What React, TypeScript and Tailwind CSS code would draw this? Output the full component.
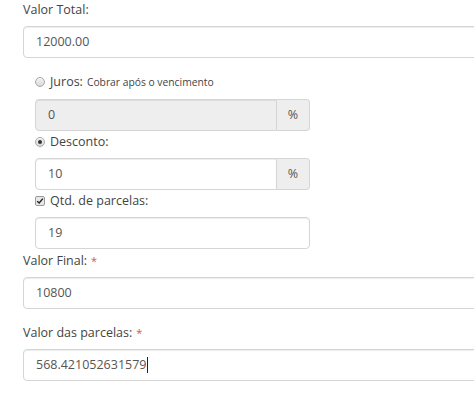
import type { ReactNode } from "react";

const font = { fontFamily: "'Open Sans', 'Noto Sans', sans-serif" };

function Field({ children, className = "" }: { children: ReactNode; className?: string }) {
  return (
    <div
      className={`h-[32px] flex items-center px-3 border border-[#d5d5d5] rounded-[4px] bg-white text-[12.5px] text-[#555] shadow-[inset_0_1px_1px_rgba(0,0,0,0.075)] ${className}`}
    >
      {children}
    </div>
  );
}

function Addon({ value, disabled }: { value: string; disabled?: boolean }) {
  return (
    <div className="flex w-[275px] h-[32px] text-[12.5px] text-[#555]">
      <div
        className={`flex-1 flex items-center px-3 border border-[#d5d5d5] rounded-l-[4px] shadow-[inset_0_1px_1px_rgba(0,0,0,0.075)] ${
          disabled ? "bg-[#eee]" : "bg-white"
        }`}
      >
        {value}
      </div>
      <div className="w-[33px] flex items-center justify-center bg-[#eee] border border-l-0 border-[#d5d5d5] rounded-r-[4px]">
        %
      </div>
    </div>
  );
}

function Label({ children, className = "" }: { children: ReactNode; className?: string }) {
  return <div className={`h-[20px] leading-[20px] text-[12.5px] text-[#444] ${className}`}>{children}</div>;
}

function Star() {
  return <span className="text-[#d9534f] text-[11px] ml-1">*</span>;
}

function Radio({ checked }: { checked?: boolean }) {
  return (
    <span className="inline-flex items-center justify-center w-[10px] h-[10px] rounded-full border border-[#aaa] bg-gradient-to-b from-[#f4f4f4] to-[#d8d8d8] mr-[5px]">
      {checked && <span className="w-[4px] h-[4px] rounded-full bg-[#333]" />}
    </span>
  );
}

function Check() {
  return (
    <span className="inline-flex items-center justify-center w-[10px] h-[10px] rounded-[2px] border border-[#999] bg-[#e8e8e8] mr-[5px]">
      <svg viewBox="0 0 10 10" className="w-[8px] h-[8px]">
        <path d="M1.5 5.2 L4 7.5 L8.5 2" fill="none" stroke="#222" strokeWidth="1.8" />
      </svg>
    </span>
  );
}

export default function App() {
  return (
    <div className="w-[474px] h-[398px] overflow-hidden bg-white pl-[23px]" style={font}>
      <Label>Valor Total:</Label>
      <Field className="mt-[6px] w-[480px]">12000.00</Field>

      <div className="pl-[12px]">
        <Label className="mt-[14px] flex items-center">
          <Radio />
          Juros:<span className="text-[10.3px] ml-1">Cobrar após o vencimento</span>
        </Label>
        <div className="mt-[7px]">
          <Addon value="0" disabled />
        </div>

        <Label className="mt-[1px] flex items-center">
          <Radio checked />
          Desconto:
        </Label>
        <div className="mt-[6px]">
          <Addon value="10" />
        </div>

        <Label className="mt-[1px] flex items-center">
          <Check />
          Qtd. de parcelas:
        </Label>
        <Field className="mt-[6px] w-[275px]">19</Field>
      </div>

      <Label className="mt-[2px]">
        Valor Final:<Star />
      </Label>
      <Field className="mt-[6px] w-[480px]">10800</Field>

      <Label className="mt-[14px]">
        Valor das parcelas:<Star />
      </Label>
      <Field className="mt-[6px] w-[480px] border-[#7fb6e3] shadow-[inset_0_1px_1px_rgba(0,0,0,0.075),0_0_6px_rgba(102,175,233,0.5)]">
        568.421052631579
        <span className="inline-block w-px h-[16px] bg-[#222]" />
      </Field>
    </div>
  );
}
